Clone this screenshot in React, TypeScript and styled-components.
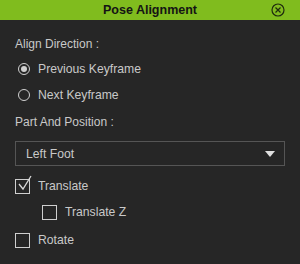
import React from "react";
import styled, { createGlobalStyle } from "styled-components";

const Global = createGlobalStyle`
  html, body { margin: 0; padding: 0; background: #262626; }
  body { font-family: "Liberation Sans", Arial, sans-serif; }
`;

const Panel = styled.div`
  width: 300px;
  height: 264px;
  background: #262626;
  display: flex;
  flex-direction: column;
  overflow: hidden;
`;

const TitleBar = styled.div`
  height: 20px;
  background: #80bc1e;
  display: flex;
  align-items: center;
  justify-content: center;
  position: relative;
  font-weight: bold;
  font-size: 12.5px;
  color: #141414;
`;

const Close = styled.svg`
  position: absolute;
  right: 15px;
  top: 3px;
`;

const Body = styled.div`
  display: flex;
  flex-direction: column;
  padding: 16px 15px 0 15px;
  color: #c9c9c9;
  font-size: 12px;
`;

const Label = styled.div<{ $mt?: number }>`
  height: 16px;
  line-height: 16px;
  margin-top: ${(p) => p.$mt ?? 0}px;
`;

const Row = styled.div<{ $indent?: number; $mt?: number }>`
  display: flex;
  align-items: center;
  gap: 8px;
  height: 16px;
  margin-top: ${(p) => p.$mt ?? 0}px;
  padding-left: ${(p) => p.$indent ?? 0}px;
  font-size: 12.2px;
`;

const Radio = styled.span<{ $on?: boolean }>`
  width: 10px;
  height: 10px;
  border: 1.5px solid #d0d0d0;
  border-radius: 50%;
  margin-left: 3px;
  display: flex;
  align-items: center;
  justify-content: center;
  &::after {
    content: "";
    display: ${(p) => (p.$on ? "block" : "none")};
    width: 6px;
    height: 6px;
    border-radius: 50%;
    background: #d0d0d0;
  }
`;

const Box = styled.span`
  width: 13px;
  height: 13px;
  border: 1px solid #cfcfcf;
  position: relative;
  flex: none;
`;

const Check = styled.svg`
  position: absolute;
  left: 1px;
  top: -5px;
`;

const Select = styled.div`
  margin-top: 11px;
  height: 23px;
  border: 1px solid #555;
  display: flex;
  align-items: center;
  justify-content: space-between;
  padding: 0 9px 0 10px;
  font-size: 12.2px;
`;

export default function App() {
  return (
    <Panel>
      <Global />
      <TitleBar>
        Pose Alignment
        <Close width="14" height="14" viewBox="0 0 14 14">
          <circle cx="7" cy="7" r="6" fill="none" stroke="#1e2a0e" strokeWidth="1.2" />
          <path d="M4.5 4.5 L9.5 9.5 M9.5 4.5 L4.5 9.5" stroke="#1e2a0e" strokeWidth="1.2" />
        </Close>
      </TitleBar>
      <Body>
        <Label>Align Direction :</Label>
        <Row $mt={9}>
          <Radio $on />
          Previous Keyframe
        </Row>
        <Row $mt={10}>
          <Radio />
          Next Keyframe
        </Row>
        <Label $mt={11}>Part And Position :</Label>
        <Select>
          Left Foot
          <svg width="10" height="6" viewBox="0 0 10 6">
            <path d="M0 0 L10 0 L5 6 Z" fill="#e0e0e0" />
          </svg>
        </Select>
        <Row $mt={12}>
          <Box>
            <Check width="16" height="16" viewBox="0 0 16 16">
              <path d="M2 9 L6 14 L14 1" fill="none" stroke="#d8d8d8" strokeWidth="1.3" />
            </Check>
          </Box>
          Translate
        </Row>
        <Row $mt={10} $indent={27}>
          <Box />
          Translate Z
        </Row>
        <Row $mt={12}>
          <Box />
          Rotate
        </Row>
      </Body>
    </Panel>
  );
}
